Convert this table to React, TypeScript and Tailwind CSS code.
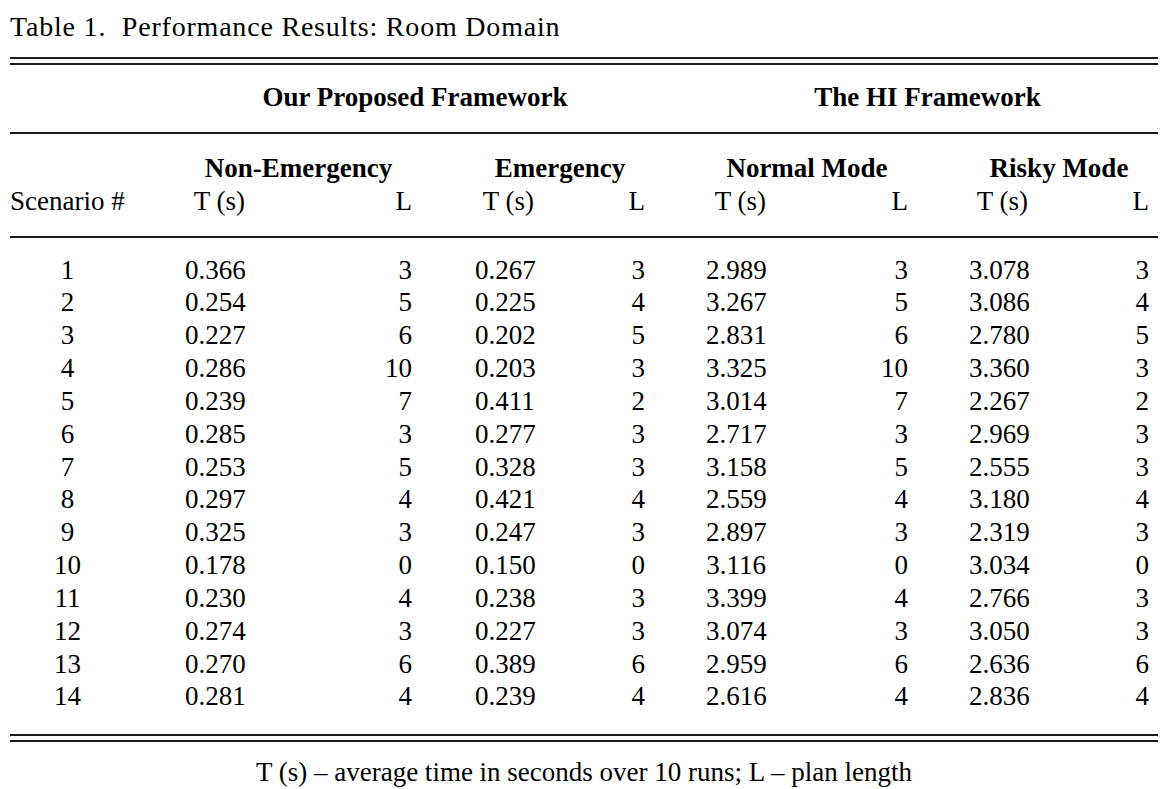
import React from "react";

const GRID =
  "grid grid-cols-[115px_60px_60px_167px_63px_59px_111px_61px_60px_142px_61px_59px_121px_9px]";

const rows: [string, string, string, string, string, string, string, string, string][] = [
  ["1", "0.366", "3", "0.267", "3", "2.989", "3", "3.078", "3"],
  ["2", "0.254", "5", "0.225", "4", "3.267", "5", "3.086", "4"],
  ["3", "0.227", "6", "0.202", "5", "2.831", "6", "2.780", "5"],
  ["4", "0.286", "10", "0.203", "3", "3.325", "10", "3.360", "3"],
  ["5", "0.239", "7", "0.411", "2", "3.014", "7", "2.267", "2"],
  ["6", "0.285", "3", "0.277", "3", "2.717", "3", "2.969", "3"],
  ["7", "0.253", "5", "0.328", "3", "3.158", "5", "2.555", "3"],
  ["8", "0.297", "4", "0.421", "4", "2.559", "4", "3.180", "4"],
  ["9", "0.325", "3", "0.247", "3", "2.897", "3", "2.319", "3"],
  ["10", "0.178", "0", "0.150", "0", "3.116", "0", "3.034", "0"],
  ["11", "0.230", "4", "0.238", "3", "3.399", "4", "2.766", "3"],
  ["12", "0.274", "3", "0.227", "3", "3.074", "3", "3.050", "3"],
  ["13", "0.270", "6", "0.389", "6", "2.959", "6", "2.636", "6"],
  ["14", "0.281", "4", "0.239", "4", "2.616", "4", "2.836", "4"],
];

function Rule() {
  return <div className="h-[2px] bg-[#1c1c1c]" />;
}

export default function App() {
  return (
    <div
      className="bg-white text-black w-[1165px] h-[789px] overflow-hidden text-[27px] leading-[33px]"
      style={{ fontFamily: '"Liberation Serif", "Times New Roman", serif' }}
    >
      <div className="ml-[10px] w-[1148px]">
        <div className="pt-[10px] h-[43px] whitespace-pre text-[28px] tracking-[0.8px]">Table 1.  Performance Results: Room Domain</div>

        <div className="mt-[14px]">
          <Rule />
          <div className="h-[4px]" />
          <Rule />
        </div>

        <div className={`${GRID} mt-[15.5px] font-bold`}>
          <div className="col-start-3 col-end-8 text-center">Our Proposed Framework</div>
          <div className="col-start-9 col-end-14 text-center">The HI Framework</div>
        </div>

        <div className="mt-[18.5px]">
          <Rule />
        </div>

        <div className={`${GRID} mt-[17.5px]`}>
          <div className="col-start-3 col-end-5 text-center font-bold">Non-Emergency</div>
          <div className="col-start-6 col-end-8 text-center font-bold">Emergency</div>
          <div className="col-start-9 col-end-11 text-center font-bold">Normal Mode</div>
          <div className="col-start-12 col-end-14 text-center font-bold">Risky Mode</div>

          <div className="col-start-1 text-left whitespace-nowrap">Scenario #</div>
          <div className="col-start-3 text-right whitespace-nowrap">T (s)</div>
          <div className="col-start-4 text-right">L</div>
          <div className="col-start-6 text-right whitespace-nowrap">T (s)</div>
          <div className="col-start-7 text-right">L</div>
          <div className="col-start-9 text-right whitespace-nowrap">T (s)</div>
          <div className="col-start-10 text-right">L</div>
          <div className="col-start-12 text-right whitespace-nowrap">T (s)</div>
          <div className="col-start-13 text-right">L</div>
        </div>

        <div className="mt-[18.5px]">
          <Rule />
        </div>

        <div className={`${GRID} mt-[15.5px] leading-[32.85px]`}>
          {rows.map((r) => (
            <React.Fragment key={r[0]}>
              <div className="col-start-1 text-center">{r[0]}</div>
              <div className="col-start-3 text-right whitespace-nowrap">{r[1]}</div>
              <div className="col-start-4 text-right">{r[2]}</div>
              <div className="col-start-6 text-right whitespace-nowrap">{r[3]}</div>
              <div className="col-start-7 text-right">{r[4]}</div>
              <div className="col-start-9 text-right whitespace-nowrap">{r[5]}</div>
              <div className="col-start-10 text-right">{r[6]}</div>
              <div className="col-start-12 text-right whitespace-nowrap">{r[7]}</div>
              <div className="col-start-13 text-right">{r[8]}</div>
            </React.Fragment>
          ))}
        </div>

        <div className="mt-[20.5px]">
          <Rule />
          <div className="h-[4px]" />
          <Rule />
        </div>

        <div className="mt-[14.5px] text-center">
          T (s) – average time in seconds over 10 runs; L – plan length
        </div>
      </div>
    </div>
  );
}
